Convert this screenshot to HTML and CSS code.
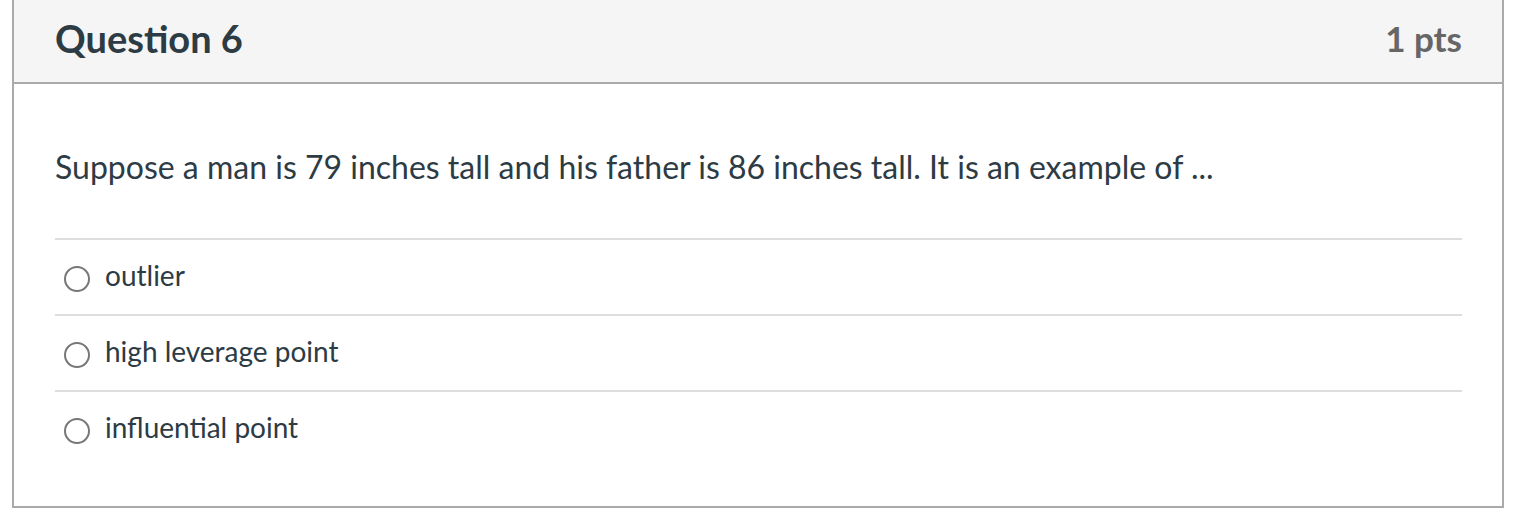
FILE: index.html
```html
<!DOCTYPE html>
<html>
<head>
<meta charset="utf-8">
<link rel="stylesheet" href="styles.css">
</head>
<body>
<div class="question">
  <div class="header">
    <h2 class="title">Question 6</h2>
    <div class="pts">1 pts</div>
  </div>
  <div class="content">
    <p class="text">Suppose a man is 79 inches tall and his father is 86 inches tall. It is an example of ...</p>
    <div class="answers">
      <label class="answer"><span class="radio"></span><span class="label">outlier</span></label>
      <label class="answer"><span class="radio"></span><span class="label">high leverage point</span></label>
      <label class="answer"><span class="radio"></span><span class="label">influential point</span></label>
    </div>
  </div>
</div>
</body>
</html>
```
FILE: styles.css
```css
html, body {
  margin: 0;
  padding: 0;
  background: #fff;
}
body {
  font-family: Lato, "Liberation Sans", sans-serif;
  color: #2d3b45;
}
.question {
  margin: -2px 0 0 12px;
  width: 1488px;
  border: 2px solid #aaaaaa;
  box-sizing: content-box;
}
.header {
  height: 82px;
  background: #f5f5f5;
  border-bottom: 2px solid #aaaaaa;
  display: flex;
  align-items: center;
  justify-content: space-between;
  padding: 0 40px 0 41px;
}
.title {
  margin: 0;
  font-size: 38px;
  font-weight: 700;
  color: #2d3b45;
  position: relative;
  top: -3px;
}
.pts {
  font-size: 35px;
  font-weight: 700;
  color: #666666;
  position: relative;
  top: -3px;
}
.content {
  padding: 0 40px 40px 41px;
}
.text {
  margin: 0;
  padding: 64px 0 52px;
  font-size: 32px;
  line-height: 38px;
}
.answers {
  border-top: 2px solid #dddddd;
}
.answer {
  display: flex;
  align-items: center;
  height: 74px;
  border-bottom: 2px solid #dddddd;
}
.answer:last-child {
  border-bottom: none;
}
.radio {
  width: 26px;
  height: 26px;
  border: 2px solid #777777;
  border-radius: 50%;
  margin-left: 9px;
  margin-right: 15px;
  box-sizing: border-box;
  position: relative;
  top: 2px;
}
.label {
  font-size: 28px;
  position: relative;
  top: -2px;
}
```
